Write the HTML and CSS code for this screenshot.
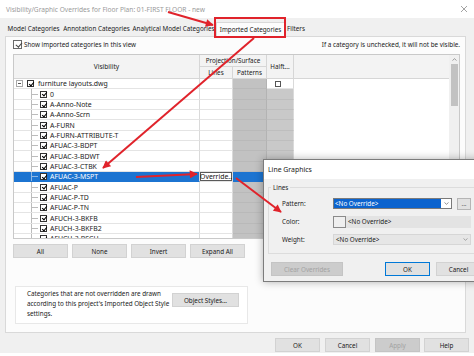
FILE: index.html
```html
<!DOCTYPE html>
<html lang="en">
<head>
  <meta charset="UTF-8" />
  <meta name="viewport" content="width=device-width, initial-scale=1.0">
  <title>Visibility/Graphic Overrides</title>
  <link rel="stylesheet" href="styles.css">
</head>
<body>

  <div class="window">
    <div class="titlebar">
      <span class="title">Visibility/Graphic Overrides for Floor Plan: 01-FIRST FLOOR - new</span>
      <svg class="close" width="8" height="8" viewBox="0 0 8 8"><path d="M1 1L7 7M7 1L1 7" stroke="#8c8c8c" stroke-width="0.8"/></svg>
    </div>

    <div class="dialog">
      <div class="tabs">
        <div class="tab t-model">Model Categories</div>
        <div class="tab t-anno">Annotation Categories</div>
        <div class="tab t-analytic">Analytical Model Categories</div>
        <div class="tab t-imported active">Imported Categories</div>
        <div class="tab t-filters">Filters</div>
      </div>

      <div class="panel">
        <div class="top-row">
          <label class="show-check"><span class="cb big checked"></span>Show imported categories in this view</label>
          <span class="hint">If a category is unchecked, it will not be visible.</span>
        </div>

        <div class="grid">
          <div class="grid-main">
            <div class="thead">
              <div class="th th-vis">Visibility</div>
              <div class="th th-proj">Projection/Surface</div>
              <div class="th th-lines">Lines</div>
              <div class="th th-pat">Patterns</div>
              <div class="th th-half">Halft...</div>
              <div class="th th-rest"></div>
            </div>
            <div class="tbody" id="rows"></div>
          </div>
          <div class="scrollbar">
            <svg class="up" width="5" height="3" viewBox="0 0 5 3"><path d="M0.5 2.5L2.5 0.7L4.5 2.5" fill="none" stroke="#777" stroke-width="0.7"/></svg>
            <div class="thumb"></div>
          </div>
        </div>

        <div class="grid-buttons">
          <button class="btn">All</button>
          <button class="btn">None</button>
          <button class="btn">Invert</button>
          <button class="btn">Expand All</button>
        </div>

        <div class="note">
          <p>Categories that are not overridden are drawn<br>according to this project's Imported Object Style<br>settings.</p>
          <button class="btn obj">Object Styles...</button>
        </div>
      </div>

      <div class="footer">
        <button class="btn">OK</button>
        <button class="btn">Cancel</button>
        <button class="btn disabled">Apply</button>
        <button class="btn help">Help</button>
      </div>
    </div>

    <div class="popup">
      <div class="popup-title">Line Graphics</div>
      <div class="popup-body">
        <div class="group">
          <div class="legend">Lines</div>
          <div class="form">
            <span class="lbl">Pattern:</span>
            <div class="pattern-row">
              <div class="combo active-combo">
                <span class="combo-text">&lt;No Override&gt;</span>
                <span class="combo-arrow"><svg width="5" height="3" viewBox="0 0 5 3"><path d="M0.5 0.5L2.5 2.3L4.5 0.5" fill="none" stroke="#666" stroke-width="0.7"/></svg></span>
              </div>
              <button class="btn dots">...</button>
            </div>

            <span class="lbl">Color:</span>
            <div class="color-field">
              <span class="swatch"></span>
              <span>&lt;No Override&gt;</span>
            </div>

            <span class="lbl">Weight:</span>
            <div class="combo flat">
              <span class="combo-text">&lt;No Override&gt;</span>
              <span class="combo-arrow"><svg width="5" height="3" viewBox="0 0 5 3"><path d="M0.5 0.5L2.5 2.3L4.5 0.5" fill="none" stroke="#888" stroke-width="0.7"/></svg></span>
            </div>
          </div>
        </div>

        <div class="popup-btns">
          <button class="btn clear">Clear Overrides</button>
          <button class="btn ok">OK</button>
          <button class="btn">Cancel</button>
        </div>
      </div>
    </div>

    <svg class="marks" width="474" height="356" viewBox="0 0 474 356">
      <defs>
        <marker id="head" viewBox="0 0 10 10" refX="9" refY="5" markerUnits="userSpaceOnUse" markerWidth="10" markerHeight="8" orient="auto">
          <path d="M0 0L10 5L0 10z" fill="#e0232b"/>
        </marker>
      </defs>
      <rect x="215" y="18" width="70" height="19" fill="none" stroke="#e0232b" stroke-width="2"/>
      <line x1="168" y1="12" x2="213" y2="25" stroke="#e0232b" stroke-width="2" marker-end="url(#head)"/>
      <line x1="254" y1="38" x2="103" y2="168" stroke="#e0232b" stroke-width="2" marker-end="url(#head)"/>
      <line x1="136" y1="177" x2="197" y2="174" stroke="#e0232b" stroke-width="2" marker-end="url(#head)"/>
      <line x1="236" y1="178" x2="281" y2="212" stroke="#e0232b" stroke-width="2" marker-end="url(#head)"/>
    </svg>
  </div>

  <script>
    const layers = [
      '0', 'A-Anno-Note', 'A-Anno-Scrn', 'A-FURN', 'A-FURN-ATTRIBUTE-T',
      'AFUAC-3-BDPT', 'AFUAC-3-BDWT', 'AFUAC-3-CTBK', 'AFUAC-3-MSPT',
      'AFUAC-P', 'AFUAC-P-TD', 'AFUAC-P-TN', 'AFUCH-3-BKFB', 'AFUCH-3-BKFB2',
      'AFUCH-3-BSCH'
    ];
    const selected = 'AFUAC-3-MSPT';

    const rows = document.getElementById('rows');

    rows.innerHTML = `
      <div class="row parent">
        <div class="c-vis"><span class="expander"></span><span class="cb checked"></span><span class="name">furniture layouts.dwg</span></div>
        <div class="c-lines"></div>
        <div class="c-pat"></div>
        <div class="c-half open"><span class="cb"></span></div>
        <div class="c-rest"></div>
      </div>`;

    layers.forEach(name => {
      const sel = name === selected;
      const div = document.createElement('div');
      div.className = sel ? 'row sel' : 'row';
      div.innerHTML = `
        <div class="c-vis"><span class="tree"></span><span class="cb checked"></span><span class="name">${name}</span></div>
        <div class="c-lines">${sel ? '<span class="override">Override...</span>' : ''}</div>
        <div class="c-pat"></div>
        <div class="c-half"></div>
        <div class="c-rest"></div>
      `;
      rows.appendChild(div);
    });
  </script>

</body>
</html>
```

FILE: styles.css
```css
* {
  margin: 0;
  padding: 0;
  box-sizing: border-box;
}

html, body {
  width: 100%;
  height: 100%;
  background: #fff;
}

body {
  font-family: 'Noto Sans', 'Open Sans', sans-serif;
  font-size: 6.3px;
  color: #1a1a1a;
  overflow: hidden;
}

.window {
  position: relative;
  width: 474px;
  height: 356px;
  overflow: hidden;
}

/* title bar */

.titlebar {
  height: 18px;
  display: flex;
  align-items: center;
  justify-content: space-between;
  padding: 0 6px;
  color: #9a9a9a;
  font-size: 6.6px;
}

.close {
  display: block;
}

/* main dialog */

.dialog {
  height: 335px;
  background: #f0f0f0;
}

.tabs {
  height: 18px;
  display: flex;
  align-items: flex-end;
  padding-left: 5px;
}

.tab {
  height: 14px;
  line-height: 14px;
  text-align: center;
  white-space: nowrap;
}

.t-model { width: 57px; }
.t-anno { width: 69px; }
.t-analytic { width: 85px; }
.t-imported { width: 69px; }
.t-filters { width: 22px; }

.tab.active {
  height: 15px;
  margin-bottom: -1px;
  background: #fcfcfc;
  border: 1px solid #d9d9d9;
  border-bottom: none;
  position: relative;
  z-index: 1;
}

.panel {
  height: 297px;
  margin: 0 8px 0 5px;
  background: #fcfcfc;
  border: 1px solid #d9d9d9;
  padding: 1px 5px 0 7px;
}

.top-row {
  height: 11px;
  margin-top: 1px;
  display: flex;
  align-items: center;
  justify-content: space-between;
}

.show-check {
  display: flex;
  align-items: center;
  gap: 2px;
}

/* checkboxes */

.cb {
  display: inline-block;
  flex-shrink: 0;
  width: 7px;
  height: 7px;
  background: #fff;
  border: 1px solid #333;
  position: relative;
}

.cb.checked::after {
  content: '';
  position: absolute;
  left: 1.6px;
  top: -0.2px;
  width: 2px;
  height: 4px;
  border-right: 1.2px solid #000;
  border-bottom: 1.2px solid #000;
  transform: rotate(40deg);
}

.cb.big {
  width: 9px;
  height: 9px;
  border-color: #6a6a6a;
}

.cb.big::after {
  left: 2.6px;
  top: 0.4px;
  width: 2.5px;
  height: 5px;
  border-right: 0.8px solid #444;
  border-bottom: 0.8px solid #444;
}

/* table */

.grid {
  height: 185px;
  margin-top: 4px;
  display: flex;
  background: #fff;
  border: 1px solid #c9c9c9;
}

.grid-main {
  flex: 1;
  display: flex;
  flex-direction: column;
  overflow: hidden;
}

.thead {
  height: 24px;
  display: grid;
  grid-template-columns: 186px 33px 34px 27px 1fr;
  grid-template-rows: 12px 12px;
}

.th {
  display: flex;
  align-items: center;
  justify-content: center;
  background: #f3f3f3;
  border-right: 1px solid #d6d6d6;
  border-bottom: 1px solid #d6d6d6;
  white-space: nowrap;
}

.th-vis { grid-column: 1; grid-row: 1 / 3; font-size: 6.6px; }
.th-proj { grid-column: 2 / 4; grid-row: 1; }
.th-lines { grid-column: 2; grid-row: 2; }
.th-pat { grid-column: 3; grid-row: 2; }
.th-half { grid-column: 4; grid-row: 1 / 3; }
.th-rest { grid-column: 5; grid-row: 1 / 3; border-right: none; }

.tbody {
  flex: 1;
  overflow: hidden;
}

.row {
  height: 10.35px;
  display: grid;
  grid-template-columns: 186px 33px 34px 27px 1fr;
  font-size: 6.9px;
}

.row > div {
  border-bottom: 1px solid #e4e4e4;
  border-right: 1px solid #dadada;
  overflow: hidden;
}

.c-vis {
  display: flex;
  align-items: center;
  white-space: nowrap;
}

.parent .c-vis {
  padding-left: 2px;
}

.expander {
  width: 7px;
  height: 7px;
  margin-right: 4px;
  border: 1px solid #a8a8a8;
  background: linear-gradient(#555, #555) center / 3px 1px no-repeat, #fff;
}

.parent .cb {
  margin-right: 4px;
}

.tree {
  align-self: stretch;
  width: 9px;
  margin-left: 17px;
  background:
    linear-gradient(#bcbcbc, #bcbcbc) 0 0 / 1px 100% no-repeat,
    linear-gradient(#bcbcbc, #bcbcbc) 0 50% / 7px 1px no-repeat;
}

.row .c-vis .tree + .cb {
  margin-right: 3px;
}

.c-lines {
  background: #fff;
}

.row > .c-pat {
  background: #c2c2c2;
  border-bottom-color: #b9b9b9;
  border-right-color: #b3b3b3;
}

.row > .c-half {
  background: #c9c9c9;
  border-bottom-color: #bebebe;
}

.row > .c-half.open {
  background: #fff;
  display: flex;
  align-items: center;
  justify-content: center;
  border-bottom-color: #e4e4e4;
}

.c-half .cb {
  width: 6px;
  height: 6px;
  border-color: #555;
}

.row > .c-rest {
  border: none;
  background: #fff;
}

.row.sel > .c-vis,
.row.sel > .c-pat,
.row.sel > .c-half,
.row.sel > .c-rest {
  background: #1c74d1;
  color: #fff;
  border-bottom-color: #1c74d1;
}

.row.sel .tree {
  background:
    linear-gradient(#8db7e6, #8db7e6) 0 0 / 1px 100% no-repeat,
    linear-gradient(#8db7e6, #8db7e6) 0 50% / 7px 1px no-repeat;
}

.override {
  display: block;
  height: 100%;
  border: 1px solid #5a5a5a;
  background: #fff;
  line-height: 8px;
  white-space: nowrap;
  text-indent: -1px;
  color: #111;
}

.scrollbar {
  width: 10px;
  display: flex;
  flex-direction: column;
  align-items: center;
  background: #f0f0f0;
}

.up {
  margin: 3px 0 3px;
}

.thumb {
  width: 7px;
  height: 42px;
  background: #c2c2c2;
}

/* buttons */

.btn {
  font-family: inherit;
  font-size: 6.3px;
  color: #1a1a1a;
  background: #e1e1e1;
  border: 1px solid #d2d2d2;
  height: 14px;
}

.grid-buttons {
  margin-top: 5px;
  display: flex;
  gap: 4px;
}

.grid-buttons .btn {
  width: 55px;
}

.note {
  width: 233px;
  height: 38px;
  margin: 28px 0 0 2px;
  display: flex;
  padding: 2px 8px 0 11px;
  background: #fff;
  border: 1px solid #e8e8e8;
  line-height: 10.2px;
}

.note p {
  white-space: nowrap;
}

.obj {
  width: 67px;
  margin: 4px 0 0 auto;
}

.footer {
  height: 20px;
  display: flex;
  justify-content: flex-end;
  gap: 5px;
  padding: 5px 5px 0 0;
}

.footer .btn {
  width: 45px;
}

.footer .help {
  margin-left: -1px;
}

.btn.disabled {
  background: #cccccc;
  border-color: #c4c4c4;
  color: #a3a3a3;
}

/* Line Graphics popup */

.popup {
  position: absolute;
  left: 263px;
  top: 159px;
  width: 224px;
  background: #f0f0f0;
  border: 1px solid #7c7c7c;
  box-shadow: 0 0 8px rgba(0, 0, 0, 0.3);
  z-index: 5;
}

.popup-title {
  height: 19px;
  line-height: 19px;
  padding-left: 4px;
  background: #fff;
  font-size: 6.9px;
  color: #222;
}

.popup-body {
  padding: 8px 5px 5px 4px;
}

.group {
  border: 1px solid #dcdcdc;
  padding: 0 0 8px 13px;
}

.legend {
  width: fit-content;
  height: 9px;
  line-height: 9px;
  margin: -5px 0 0 -11px;
  padding: 0 2px;
  background: #f0f0f0;
}

.form {
  margin-top: 6px;
  display: grid;
  grid-template-columns: 51px 138px;
  grid-auto-rows: 11px;
  row-gap: 7px;
  align-items: center;
}

.pattern-row {
  display: flex;
  align-items: center;
  gap: 5px;
}

.combo {
  height: 11px;
  display: flex;
  align-items: center;
}

.active-combo {
  width: 119px;
  border: 1px solid #7a7a7a;
  background: #fff;
}

.active-combo .combo-text {
  flex: 1;
  height: 100%;
  line-height: 9px;
  padding-left: 1px;
  background: #0b63ce;
  color: #fff;
}

.combo-arrow {
  width: 10px;
  display: flex;
  justify-content: center;
}

.combo-arrow svg {
  display: block;
}

.dots {
  width: 14px;
  height: 12px;
  line-height: 8px;
  color: #666;
  border-color: #b5b5b5;
}

.color-field {
  width: 138px;
  height: 12px;
  display: flex;
  align-items: center;
  gap: 2px;
  background: #e3e3e3;
}

.swatch {
  width: 13px;
  height: 12px;
  background: #efefef;
  border: 1px solid #8a8a8a;
}

.flat {
  width: 138px;
  background: #e6e6e6;
  border: 1px solid #d6d6d6;
  justify-content: space-between;
  padding-left: 2px;
}

.popup-btns {
  display: flex;
  margin-top: 8px;
  padding-left: 3px;
}

.popup-btns .btn {
  width: 45px;
  flex-shrink: 0;
}

.popup-btns .clear {
  width: 72px;
  background: #cccccc;
  border-color: #c4c4c4;
  color: #a3a3a3;
}

.popup-btns .ok {
  margin-left: 42px;
  margin-right: 6px;
  border: 1px solid #0078d7;
}

/* red annotations */

.marks {
  position: absolute;
  left: 0;
  top: 0;
  z-index: 10;
  pointer-events: none;
}
```
